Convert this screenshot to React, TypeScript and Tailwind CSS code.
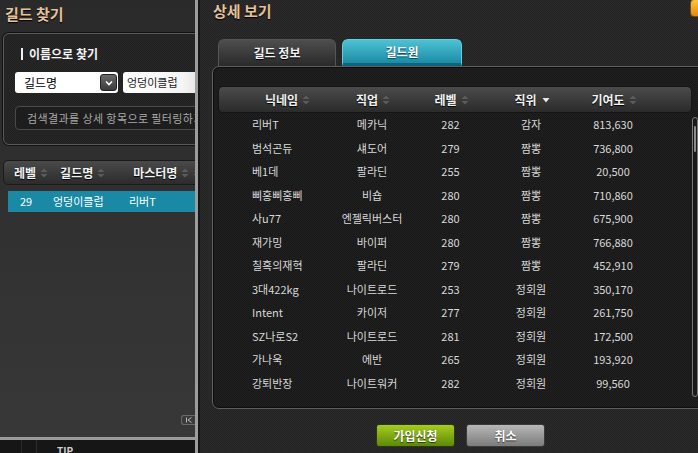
import React from "react";

type Member = {
  name: string;
  job: string;
  level: number;
  rank: string;
  contrib: string;
};

const members: Member[] = [
  { name: "리버T", job: "메카닉", level: 282, rank: "감자", contrib: "813,630" },
  { name: "범석곤듀", job: "섀도어", level: 279, rank: "짬뽕", contrib: "736,800" },
  { name: "베1데", job: "팔라딘", level: 255, rank: "짬뽕", contrib: "20,500" },
  { name: "삐홍삐홍삐", job: "비숍", level: 280, rank: "짬뽕", contrib: "710,860" },
  { name: "사u77", job: "엔젤릭버스터", level: 280, rank: "짬뽕", contrib: "675,900" },
  { name: "재가밍", job: "바이퍼", level: 280, rank: "짬뽕", contrib: "766,880" },
  { name: "칠흑의재혁", job: "팔라딘", level: 279, rank: "짬뽕", contrib: "452,910" },
  { name: "3대422kg", job: "나이트로드", level: 253, rank: "정회원", contrib: "350,170" },
  { name: "Intent", job: "카이저", level: 277, rank: "정회원", contrib: "261,750" },
  { name: "SZ나로S2", job: "나이트로드", level: 281, rank: "정회원", contrib: "172,500" },
  { name: "가나욱", job: "에반", level: 265, rank: "정회원", contrib: "193,920" },
  { name: "강퇴반장", job: "나이트워커", level: 282, rank: "정회원", contrib: "99,560" },
];

const SortArrows = () => (
  <svg width="8" height="10" viewBox="0 0 8 10" className="ml-[4px] shrink-0">
    <path d="M4 0.5 L7.5 4 H0.5 Z" fill="#5c5c5c" />
    <path d="M4 9.5 L7.5 6 H0.5 Z" fill="#5c5c5c" />
  </svg>
);

const SortDown = () => (
  <svg width="8" height="10" viewBox="0 0 8 10" className="ml-[5px] shrink-0">
    <path d="M0.5 3 H7.5 L4 7.5 Z" fill="#e8e8e8" />
  </svg>
);

const headText = "text-[12px] font-bold text-[#f2f2f2] [text-shadow:0_1px_1px_#000]";

const GuildSearch = () => {
  return (
    <div className="w-[195px] h-full flex flex-col overflow-hidden bg-gradient-to-b from-[#2a2a2a] to-[#383838] shrink-0">
      <div className="h-[33px] pl-[5px] pt-[4px] text-[15px] font-bold leading-[20px] text-[#e6c29a] [text-shadow:0_1px_1px_#000] whitespace-nowrap">
        길드 찾기
      </div>

      {/* 이름으로 찾기 */}
      <div className="ml-[3px] w-[260px] h-[112px] rounded-[6px] border border-[#5a5a5a] bg-[repeating-conic-gradient(#272727_0_25%,#212121_0_50%)] bg-size-[2px_2px] shadow-[0_0_0_1px_#111] pl-[11px] pt-[13px] shrink-0">
        <div className="flex items-center h-[14px]">
          <div className="w-[2px] h-[12px] bg-[#f0f0f0] ml-[6px]" />
          <span className="ml-[6px] text-[12px] font-bold text-[#f4f4f4] leading-none whitespace-nowrap">
            이름으로 찾기
          </span>
        </div>
        <div className="flex items-center mt-[11px] h-[21px]">
          <div className="w-[103px] h-[21px] rounded-[3px] bg-white flex items-center justify-between pl-[9px] pr-[1px]">
            <span className="text-[12px] text-black leading-none">길드명</span>
            <div className="w-[17px] h-[17px] rounded-[3px] bg-gradient-to-b from-[#6a6a6a] to-[#3c3c3c] border border-[#222] flex items-center justify-center">
              <svg width="8" height="6" viewBox="0 0 8 6">
                <path d="M1 1.5 L4 4.5 L7 1.5" stroke="#fff" strokeWidth="1.6" fill="none" />
              </svg>
            </div>
          </div>
          <div className="ml-[5px] w-[120px] h-[21px] rounded-[3px] bg-gradient-to-r from-white via-[#f4f4f4] to-[#bdbdbd] flex items-center pl-[4px]">
            <span className="text-[11px] text-[#222] leading-none whitespace-nowrap">엉덩이클럽</span>
          </div>
        </div>
        <div className="mt-[13px] w-[240px] h-[24px] rounded-[4px] border border-[#4a4a4a] bg-[#1d1d1d] flex items-center pl-[11px]">
          <span className="text-[11px] tracking-[0.4px] text-[#a8a8a8] leading-none whitespace-nowrap">
            검색결과를 상세 항목으로 필터링하기
          </span>
        </div>
      </div>

      <div className="mt-[15px] ml-[3px] w-[260px] h-[25px] rounded-[5px] bg-gradient-to-b from-[#4a4a4a] to-[#2c2c2c] border border-[#1a1a1a] flex items-center pl-[10px] shrink-0">
        <span className={headText}>레벨</span>
        <SortArrows />
        <span className={`${headText} ml-[12px]`}>길드명</span>
        <SortArrows />
        <span className={`${headText} ml-[28px]`}>마스터명</span>
        <SortArrows />
        <SortArrows />
      </div>

      <div className="mt-[6px] ml-[8px] w-[200px] h-[21px] bg-[#1a89a5] flex items-center pl-[12px] text-[11px] text-white shrink-0">
        <span className="w-[33px]">29</span>
        <span className="w-[76px] whitespace-nowrap">엉덩이클럽</span>
        <span>리버T</span>
      </div>

      <div className="flex-1 flex items-end justify-end pb-[12px]">
        <div className="w-[14px] h-[10px] rounded-l-[3px] bg-[#3a3a3a] border border-[#6a6a6a] border-r-0 flex items-center justify-center">
          <svg width="8" height="6" viewBox="0 0 8 6">
            <path d="M1.5 0.5 V5.5 M6.5 0.5 L3 3 L6.5 5.5" stroke="#bbb" strokeWidth="1" fill="none" />
          </svg>
        </div>
      </div>

      <div className="h-[3px] bg-[#9a9a9a] shrink-0" />
      <div className="h-[13px] bg-[#161616] flex shrink-0">
        <div className="w-[22px] border-r border-[#2c2c2c]" />
        <div className="w-[15px] border-r border-[#2c2c2c]" />
        <span className="ml-[20px] mt-[6px] text-[10px] font-bold text-[#cfcfcf] leading-none">TIP</span>
      </div>
    </div>
  );
};

const MemberDetail = () => {
  return (
    <div className="flex-1 h-full flex flex-col overflow-hidden bg-[repeating-conic-gradient(#2a2a2a_0_25%,#242424_0_50%)] bg-size-[2px_2px] border-l-2 border-[#161616]">
      <div className="h-[39px] flex items-start shrink-0">
        <span className="ml-[13px] mt-[1px] text-[15px] font-bold leading-[20px] text-[#e6c29a] [text-shadow:0_1px_1px_#000] whitespace-nowrap">
          상세 보기
        </span>
        <div className="ml-auto mr-[-10px] -mt-[1px] w-[18px] h-[18px] rounded-[4px] bg-gradient-to-b from-[#ffc43a] to-[#e08a10] border border-[#7a4a08]" />
      </div>

      <div className="flex items-end pl-[18px] gap-[6px] h-[27px] shrink-0">
        <div className="w-[118px] h-[27px] rounded-t-[6px] bg-gradient-to-b from-[#4e4e4e] to-[#2a2a2a] border border-[#555] border-b-0 flex items-center justify-center">
          <span className={headText}>길드 정보</span>
        </div>
        <div className="w-[120px] h-[27px] rounded-t-[6px] bg-gradient-to-b from-[#4cc2d4] to-[#1a8ca6] border border-[#62cfe0] border-b-[3px] border-b-[#0f6478] flex items-center justify-center">
          <span className="text-[12px] font-bold text-white [text-shadow:0_1px_1px_#0a4a58]">길드원</span>
        </div>
      </div>

      {/* 길드원 목록 */}
      <div className="ml-[12px] w-[520px] h-[343px] rounded-[7px] border border-[#5e5e5e] bg-[repeating-conic-gradient(#1f1f1f_0_25%,#191919_0_50%)] bg-size-[2px_2px] shadow-[inset_0_0_0_1px_#0e0e0e] pl-[5px] pt-[19px] shrink-0">
        <div className="w-[474px] h-[27px] rounded-[5px] bg-gradient-to-b from-[#4b4b4b] to-[#2b2b2b] border border-[#151515] grid grid-cols-[115px_78px_79px_82px_82px] items-center">
          <div className="flex items-center pl-[46px]">
            <span className={headText}>닉네임</span>
            <SortArrows />
          </div>
          <div className="flex items-center justify-center">
            <span className={headText}>직업</span>
            <SortArrows />
          </div>
          <div className="flex items-center justify-center">
            <span className={headText}>레벨</span>
            <SortArrows />
          </div>
          <div className="flex items-center justify-center">
            <span className={headText}>직위</span>
            <SortDown />
          </div>
          <div className="flex items-center justify-center">
            <span className={headText}>기여도</span>
            <SortArrows />
          </div>
        </div>

        <div className="flex">
          <div className="w-[474px]">
            {members.map((m) => (
              <div
                key={m.name}
                className="h-[23.5px] grid grid-cols-[115px_78px_79px_82px_82px] items-center text-[11px] text-[#d8d8d8] leading-none whitespace-nowrap"
              >
                <span className="pl-[34px]">{m.name}</span>
                <span className="text-center">{m.job}</span>
                <span className="text-center">{m.level}</span>
                <span className="text-center">{m.rank}</span>
                <span className="text-center">{m.contrib}</span>
              </div>
            ))}
          </div>
          <div className="mt-[4px] w-[6px] h-[280px] rounded-full border border-[#7a7a7a] bg-[#1a1a1a] pt-[8px] flex justify-center">
            <div className="w-[2px] h-[26px] rounded-full bg-[#8a8a8a]" />
          </div>
        </div>
      </div>

      <div className="flex pl-[176px] pt-[15px] gap-[11px] shrink-0">
        <button className="w-[79px] h-[23px] rounded-[3px] bg-gradient-to-b from-[#a6cc1e] to-[#5c8a08] border border-[#2e3a0c] text-[12px] font-bold text-white [text-shadow:0_1px_1px_#2a3a00]">
          가입신청
        </button>
        <button className="w-[79px] h-[23px] rounded-[3px] bg-gradient-to-b from-[#b8b8b8] to-[#7c7c7c] border border-[#3a3a3a] text-[12px] font-bold text-white [text-shadow:0_1px_1px_#333]">
          취소
        </button>
      </div>
    </div>
  );
}

export default function App() {
  return (
    <div className="w-[698px] h-[453px] flex overflow-hidden bg-[#272727] font-['Noto_Sans_CJK_KR','Noto_Sans',sans-serif]">
      <GuildSearch />
      <div className="w-[3px] h-full bg-[#9c9c9c] shrink-0" />
      <MemberDetail />
    </div>
  );
}
